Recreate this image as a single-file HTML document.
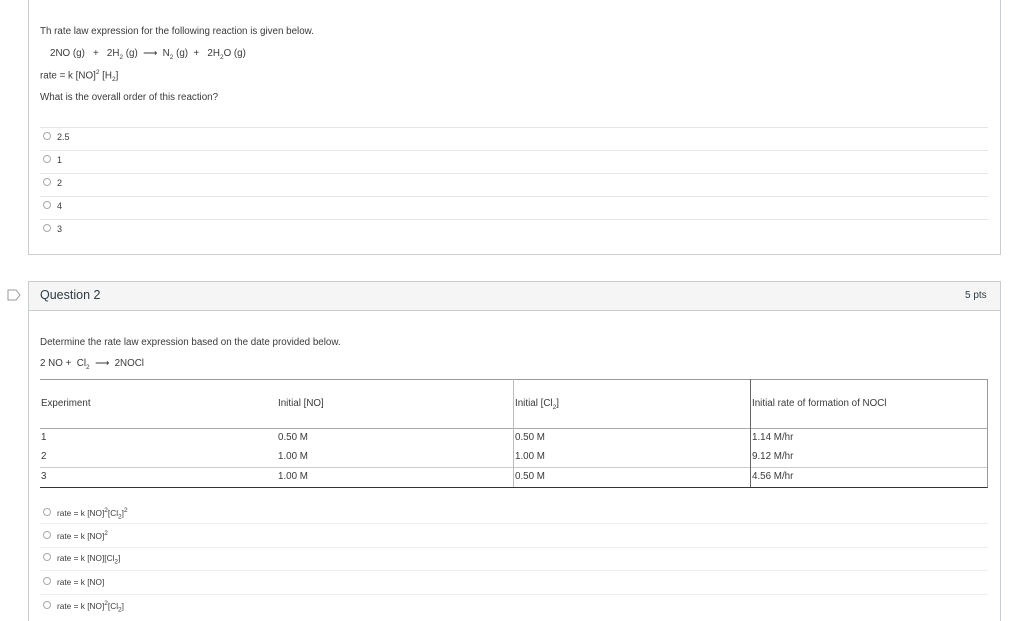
<!DOCTYPE html>
<html><head><style>
html,body{margin:0;width:1024px;height:621px;overflow:hidden}
body{background:#fff;font-family:"Liberation Sans",sans-serif;color:#3a3a3a;position:relative}
.a{position:absolute;white-space:nowrap}
.s{font-size:9.8px}
.hl{position:absolute;height:1px;background:#e6e6e6}
.r{display:inline-block;width:6px;height:6px;border:1px solid #aaa;border-radius:50%;vertical-align:0px;margin-right:6px}
sub,sup{font-size:6.5px}
</style></head><body>
<div style="position:absolute;left:28px;top:0;width:971px;height:254px;border:1px solid #c7cdd1;border-top:none"></div>
<div class="a s" style="left:40px;top:26px">Th rate law expression for the following reaction is given below.</div>
<div class="a s" style="left:50px;top:48px">2NO (g) &nbsp;&nbsp;+ &nbsp;&nbsp;2H<sub>2</sub> (g) &nbsp;⟶ &nbsp;N<sub>2</sub> (g) &nbsp;+ &nbsp;&nbsp;2H<sub>2</sub>O (g)</div>
<div class="a s" style="left:40px;top:69px">rate = k [NO]<sup>2</sup> [H<sub>2</sub>]</div>
<div class="a s" style="left:40px;top:92px">What is the overall order of this reaction?</div>
<div class="hl" style="left:40px;top:127px;width:948px"></div>
<div class="hl" style="left:40px;top:150px;width:948px"></div>
<div class="hl" style="left:40px;top:173px;width:948px"></div>
<div class="hl" style="left:40px;top:196px;width:948px"></div>
<div class="hl" style="left:40px;top:219px;width:948px"></div>
<div class="a" style="left:43px;top:132px;font-size:9px"><span class="r"></span>2.5</div>
<div class="a" style="left:43px;top:155px;font-size:9px"><span class="r"></span>1</div>
<div class="a" style="left:43px;top:178px;font-size:9px"><span class="r"></span>2</div>
<div class="a" style="left:43px;top:201px;font-size:9px"><span class="r"></span>4</div>
<div class="a" style="left:43px;top:224px;font-size:9px"><span class="r"></span>3</div>

<svg class="a" style="left:7px;top:289px" width="15" height="12"><path d="M1 1H9L13 6L9 11H1Z" fill="none" stroke="#999" stroke-width="1"/></svg>
<div style="position:absolute;left:28px;top:281px;width:971px;height:339px;border:1px solid #c7cdd1;border-bottom:none"></div>
<div style="position:absolute;left:29px;top:282px;width:971px;height:28px;background:#f5f5f5;border-bottom:1px solid #c7cdd1"></div>
<div class="a" style="left:40px;top:288px;font-size:12.5px;color:#2d3b45">Question 2</div>
<div class="a" style="left:965px;top:290px;font-size:10px;color:#2d3b45">5 pts</div>
<div class="a s" style="left:40px;top:337px">Determine the rate law expression based on the date provided below.</div>
<div class="a s" style="left:40px;top:358px">2 NO + &nbsp;Cl<sub>2</sub> &nbsp;⟶ &nbsp;2NOCl</div>
<div style="position:absolute;left:40px;top:379px;width:947px;height:107px;border-top:1px solid #999;border-right:1px solid #999;border-bottom:1px solid #333"></div>
<div style="position:absolute;left:40px;top:428px;width:947px;height:1px;background:#aaa"></div>
<div style="position:absolute;left:40px;top:467px;width:947px;height:1px;background:#ccc"></div>
<div style="position:absolute;left:513px;top:379px;width:1px;height:108px;background:#bbb"></div>
<div style="position:absolute;left:750px;top:379px;width:1px;height:108px;background:#666"></div>
<div class="a s" style="left:41px;top:398px">Experiment</div>
<div class="a s" style="left:278px;top:398px">Initial [NO]</div>
<div class="a s" style="left:515px;top:398px">Initial [Cl<sub>2</sub>]</div>
<div class="a s" style="left:752px;top:398px">Initial rate of formation of NOCl</div>
<div class="a s" style="left:41px;top:432px">1</div><div class="a s" style="left:278px;top:432px">0.50 M</div><div class="a s" style="left:515px;top:432px">0.50 M</div><div class="a s" style="left:752px;top:432px">1.14 M/hr</div>
<div class="a s" style="left:41px;top:451px">2</div><div class="a s" style="left:278px;top:451px">1.00 M</div><div class="a s" style="left:515px;top:451px">1.00 M</div><div class="a s" style="left:752px;top:451px">9.12 M/hr</div>
<div class="a s" style="left:41px;top:471px">3</div><div class="a s" style="left:278px;top:471px">1.00 M</div><div class="a s" style="left:515px;top:471px">0.50 M</div><div class="a s" style="left:752px;top:471px">4.56 M/hr</div>
<div class="hl" style="left:40px;top:523px;width:948px;background:#eee"></div>
<div class="hl" style="left:40px;top:547px;width:948px;background:#eee"></div>
<div class="hl" style="left:40px;top:570px;width:948px;background:#eee"></div>
<div class="hl" style="left:40px;top:594px;width:948px;background:#eee"></div>
<div class="a" style="left:43px;top:507px;font-size:8.3px"><span class="r"></span>rate = k [NO]<sup>2</sup>[Cl<sub>2</sub>]<sup>2</sup></div>
<div class="a" style="left:43px;top:530px;font-size:8.3px"><span class="r"></span>rate = k [NO]<sup>2</sup></div>
<div class="a" style="left:43px;top:553px;font-size:8.3px"><span class="r"></span>rate = k [NO][Cl<sub>2</sub>]</div>
<div class="a" style="left:43px;top:577px;font-size:8.3px"><span class="r"></span>rate = k [NO]</div>
<div class="a" style="left:43px;top:600px;font-size:8.3px"><span class="r"></span>rate = k [NO]<sup>2</sup>[Cl<sub>2</sub>]</div>
</body></html>
